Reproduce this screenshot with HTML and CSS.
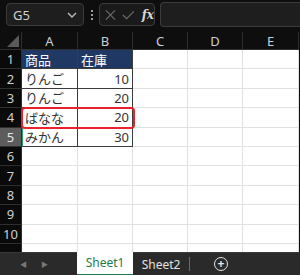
FILE: index.html
```html
<!DOCTYPE html>
<html lang="ja">
<head>
  <meta charset="UTF-8">
  <title>Book1</title>
  <link rel="stylesheet" href="styles.css">
</head>
<body>
  <div class="toolbar">
    <div class="namebox">
      <span>G5</span>
      <svg width="10" height="6" viewBox="0 0 10 6"><path d="M1 1 L5 5 L9 1" fill="none" stroke="#bdbdbd" stroke-width="1.4"/></svg>
    </div>
    <div class="dots"><i></i><i></i><i></i></div>
    <div class="fbox">
      <svg width="12" height="12" viewBox="0 0 12 12"><path d="M1 1 L11 11 M11 1 L1 11" stroke="#6b6b6b" stroke-width="1.3"/></svg>
      <svg width="14" height="12" viewBox="0 0 14 12"><path d="M1 6 L5 10 L13 2" fill="none" stroke="#6b6b6b" stroke-width="1.3"/></svg>
      <span class="fx">fx</span>
    </div>
    <div class="formula"></div>
  </div>

  <div class="sheet">
    <div class="grid">
      <div class="corner"><span></span></div>
      <div class="ch">A</div><div class="ch">B</div><div class="ch">C</div><div class="ch">D</div><div class="ch">E</div>

      <div class="rh">1</div><div class="c t head">商品</div><div class="c t head">在庫</div><div class="c"></div><div class="c"></div><div class="c"></div>
      <div class="rh">2</div><div class="c t">りんご</div><div class="c t num">10</div><div class="c"></div><div class="c"></div><div class="c"></div>
      <div class="rh">3</div><div class="c t">りんご</div><div class="c t num">20</div><div class="c"></div><div class="c"></div><div class="c"></div>
      <div class="rh">4</div><div class="c t">ばなな</div><div class="c t num">20</div><div class="c"></div><div class="c"></div><div class="c"></div>
      <div class="rh sel">5</div><div class="c t mark">みかん</div><div class="c t num">30</div><div class="c"></div><div class="c"></div><div class="c"></div>
      <div class="rh">6</div><div class="c"></div><div class="c"></div><div class="c"></div><div class="c"></div><div class="c"></div>
      <div class="rh">7</div><div class="c"></div><div class="c"></div><div class="c"></div><div class="c"></div><div class="c"></div>
      <div class="rh">8</div><div class="c"></div><div class="c"></div><div class="c"></div><div class="c"></div><div class="c"></div>
      <div class="rh">9</div><div class="c"></div><div class="c"></div><div class="c"></div><div class="c"></div><div class="c"></div>
      <div class="rh">10</div><div class="c"></div><div class="c"></div><div class="c"></div><div class="c"></div><div class="c"></div>
      <div class="rh">11</div><div class="c"></div><div class="c"></div><div class="c"></div><div class="c"></div><div class="c"></div>
    </div>
    <div class="highlight"></div>
  </div>

  <div class="tabs">
    <div class="nav"><span>&#9664;</span><span>&#9654;</span></div>
    <div class="tab active">Sheet1</div>
    <div class="tab">Sheet2</div>
    <div class="sep"></div>
    <div class="add">+</div>
  </div>
</body>
</html>
```

FILE: styles.css
```css
body {
  margin: 0;
  width: 300px;
  height: 275px;
  overflow: hidden;
  background: #0e0e0e;
  font-family: "Noto Sans", "Noto Sans CJK JP", sans-serif;
}

/* formula bar */
.toolbar {
  display: flex;
  align-items: center;
  height: 32px;
  padding: 0 0 3px 6px;
  box-sizing: border-box;
  background: #0e0e0e;
}

.namebox {
  display: flex;
  align-items: center;
  justify-content: space-between;
  width: 78px;
  height: 23px;
  box-sizing: border-box;
  padding: 0 6px 0 6px;
  border: 1px solid #3b3b3b;
  border-radius: 4px;
  background: #1e1e1e;
  color: #d2d2d2;
  font-size: 13px;
}

.dots {
  display: flex;
  flex-direction: column;
  gap: 2px;
  margin: 0 6px 0 7px;
}

.dots i {
  display: block;
  width: 2px;
  height: 2px;
  background: #9a9a9a;
}

.fbox {
  display: flex;
  align-items: center;
  gap: 6px;
  width: 56px;
  height: 23px;
  box-sizing: border-box;
  padding: 0 0 0 5px;
  border: 1px solid #3b3b3b;
  border-radius: 4px;
  background: #1a1a1a;
}

.fx {
  color: #d8d8d8;
  font-family: "DejaVu Serif", serif;
  font-style: italic;
  font-weight: bold;
  font-size: 12px;
  margin-left: 1px;
}

.formula {
  flex: 1;
  height: 23px;
  margin-left: 5px;
  border: 1px solid #3b3b3b;
  border-right: 0;
  border-radius: 4px 0 0 4px;
  background: #1e1e1e;
}

/* sheet */
.sheet {
  position: relative;
  height: 220px;
  overflow: hidden;
}

.grid {
  display: grid;
  grid-template-columns: 22px 56px 55px 55px 55px 56px;
  grid-template-rows: 18px repeat(10, 19.4px) 26px;
}

.grid > div {
  box-sizing: border-box;
  border-right: 1px solid #e1e1e1;
  border-bottom: 1px solid #e1e1e1;
}

.corner {
  position: relative;
  background: #0e0e0e;
  border-color: #2e2e2e !important;
}

.corner span {
  position: absolute;
  right: 2px;
  bottom: 2px;
  border-left: 12px solid transparent;
  border-bottom: 12px solid #5a5a5a;
}

.ch {
  display: flex;
  align-items: center;
  justify-content: center;
  background: #0e0e0e;
  border-color: #2e2e2e !important;
  color: #c9d0d8;
  font-size: 13px;
}

.rh {
  display: flex;
  align-items: center;
  justify-content: center;
  background: #0a0a0a;
  border-color: #2e2e2e !important;
  color: #cfcfcf;
  font-size: 13px;
}

.grid > .rh:last-of-type {
  align-items: flex-start;
  padding-top: 2px;
}

.rh.sel {
  background: #5c5c5c;
  color: #e6e6e6;
}

.c {
  display: flex;
  align-items: center;
  padding: 0 3px;
  background: #fff;
  color: #333;
  font-family: "Noto Sans CJK JP", sans-serif;
  font-size: 13px;
}

.c.t {
  border-color: #3c3c3c;
}

.c.head {
  background: #203864;
  color: #fff;
}

.c.num {
  justify-content: flex-end;
  font-family: "Noto Sans", sans-serif;
}

.c.mark {
  box-shadow: inset 1px 0 0 #21a366;
}

.highlight {
  position: absolute;
  left: 21px;
  top: 75px;
  width: 114px;
  height: 22px;
  box-sizing: border-box;
  border: 2px solid #e8232d;
  border-radius: 4px;
}

/* sheet tabs */
.tabs {
  display: flex;
  align-items: center;
  height: 23px;
  background: #2a2a2a;
  border-top: 1px solid #3a3a3a;
  box-sizing: border-box;
}

.nav {
  display: flex;
  gap: 14px;
  width: 77px;
  padding-left: 20px;
  box-sizing: border-box;
  color: #777;
  font-size: 7px;
}

.tab {
  display: flex;
  align-items: center;
  justify-content: center;
  width: 56px;
  height: 23px;
  box-sizing: border-box;
  color: #e2e2e2;
  font-size: 12px;
}

.tab.active {
  margin-top: -1px;
  height: 24px;
  background: #fff;
  color: #1f7a4d;
  border-bottom: 2px solid #1f7a4d;
}

.sep {
  width: 1px;
  height: 14px;
  margin-left: 0;
  background: #6a6a6a;
}

.add {
  display: flex;
  align-items: center;
  justify-content: center;
  width: 12px;
  height: 12px;
  margin-left: 24px;
  border: 1.5px solid #e6e6e6;
  border-radius: 50%;
  color: #e6e6e6;
  font-size: 12px;
  font-weight: bold;
  line-height: 1;
}
```
